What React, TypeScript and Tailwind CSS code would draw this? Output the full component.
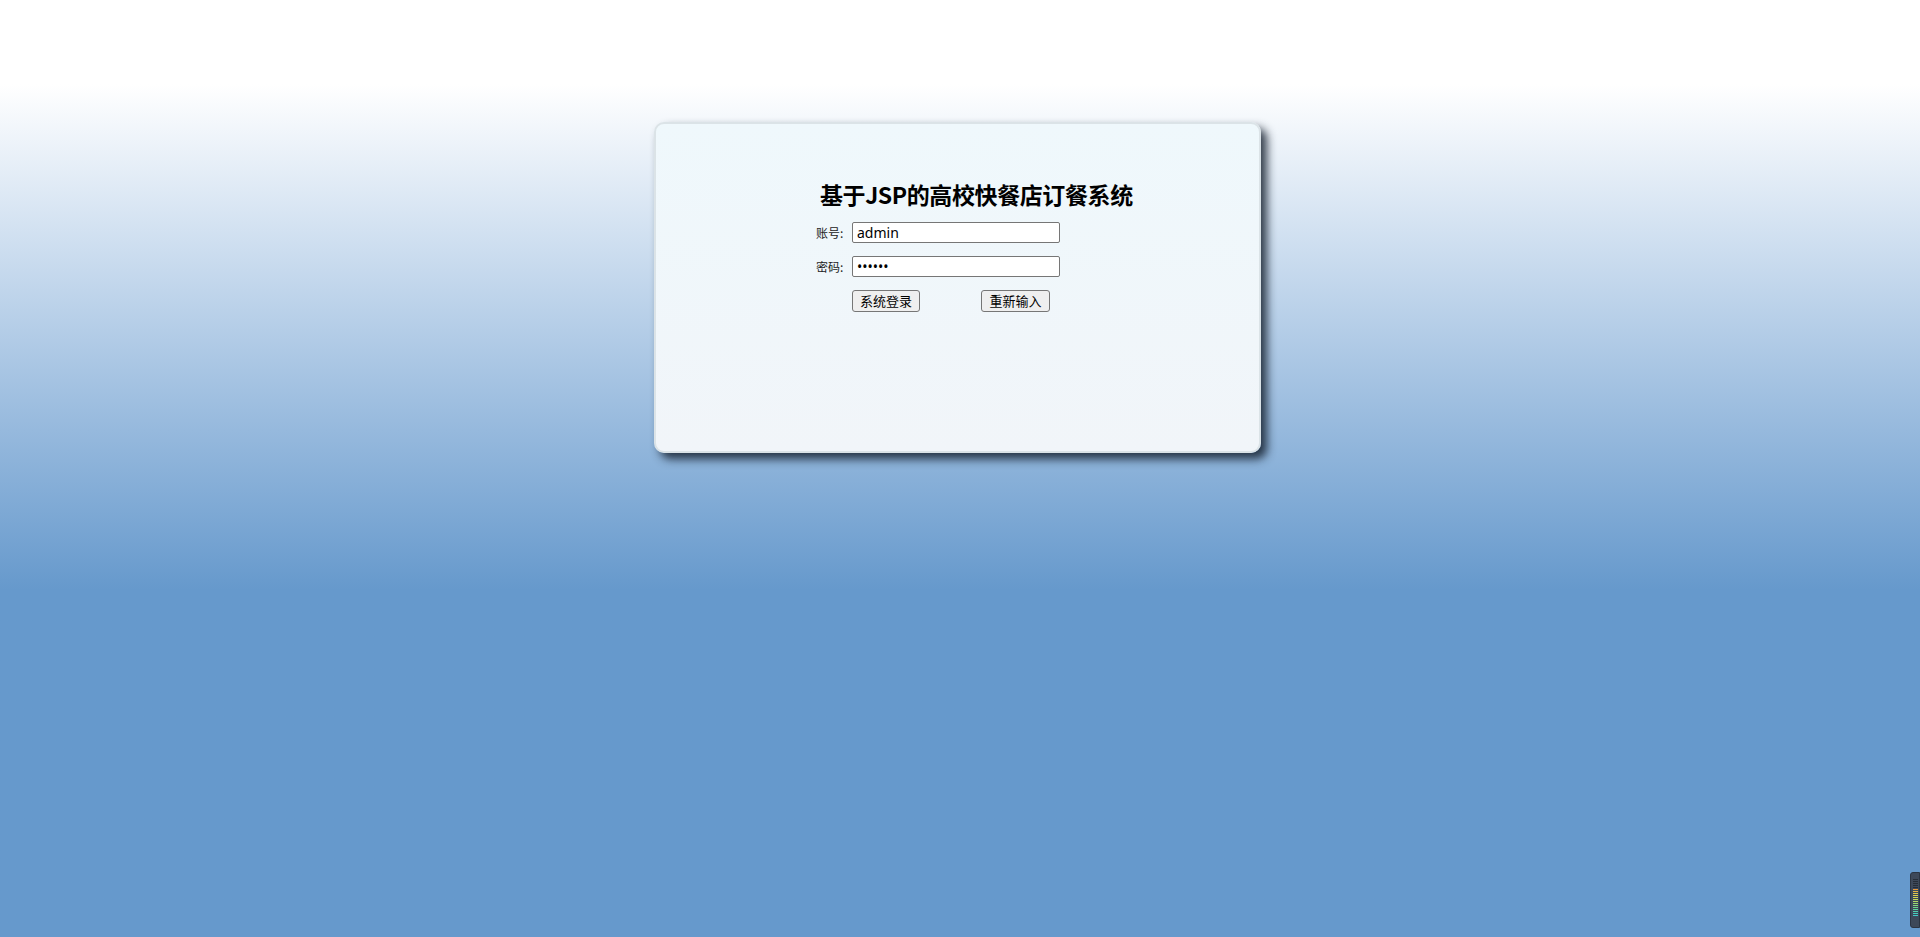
import React from 'react'

const meterBars = [
  'bg-[#262d38]',
  'bg-[#262d38]',
  'bg-[#262d38]',
  'bg-[#262d38]',
  'bg-[#262d38]',
  'bg-[#e8983a]',
  'bg-[#e6b443]',
  'bg-[#e2c84a]',
  'bg-[#dcd04e]',
  'bg-[#d2d452]',
  'bg-[#c4d65a]',
  'bg-[#b2d864]',
  'bg-[#9cd870]',
  'bg-[#86d67c]',
  'bg-[#70d48a]',
  'bg-[#5ed29a]',
  'bg-[#50d0ac]',
  'bg-[#46cebc]',
  'bg-[#40cac8]',
]

function Field({ label, type, value }: { label: string; type: string; value: string }) {
  return (
    <div className="flex items-center">
      <label className="w-[36px] text-[12px] text-[#222] leading-none">{label}</label>
      <input
        type={type}
        defaultValue={value}
        readOnly
        className="h-[21px] w-[208px] rounded-[2px] border border-[#767676] bg-white px-[4px] text-[14px] leading-none text-black outline-none font-['Noto_Sans','Open_Sans',sans-serif]"
      />
    </div>
  )
}

function Meter() {
  return (
    <div className="absolute right-0 top-[872px] flex h-[56px] w-[10px] flex-col gap-[1px] rounded-l-[3px] border border-[#2b3442] bg-[#3d4859] pl-[2px] pt-[6px]">
      {meterBars.map((c, i) => (
        <div key={i} className={`h-[1px] w-[5px] ${c}`} />
      ))}
    </div>
  )
}

export default function App() {
  return (
    <div className="relative h-[937px] w-full overflow-hidden bg-linear-to-b from-white from-9% to-[#6699cc] to-63% font-['Noto_Sans_CJK_SC',sans-serif]">
      <div className="pt-[122px]">
        <div className="ml-[654px] h-[331px] w-[607px] rounded-[10px] border-2 border-[#dbe3e7] bg-linear-to-b from-[#eff8fc] to-[#f1f5f9] shadow-[6px_6px_10px_rgba(20,30,45,0.85)]">
          <div className="pl-[160px] pt-[54px]">
            <h2 className="ml-[4px] text-[23px] font-bold leading-[32px] tracking-[-0.4px] text-black">
              基于JSP的高校快餐店订餐系统
            </h2>
            <div className="mt-[12px] flex flex-col gap-[13px]">
              <Field label="账号:" type="text" value="admin" />
              <Field label="密码:" type="password" value="123456" />
              <div className="ml-[36px] flex gap-[61px]">
                <button className="h-[22px] w-[68px] rounded-[3px] border border-[#767676] bg-[#efefef] pb-[1px] text-[13px] leading-none text-black">
                  系统登录
                </button>
                <button className="h-[22px] w-[69px] rounded-[3px] border border-[#767676] bg-[#efefef] pb-[1px] text-[13px] leading-none text-black">
                  重新输入
                </button>
              </div>
            </div>
          </div>
        </div>
      </div>
      <Meter />
    </div>
  )
}
